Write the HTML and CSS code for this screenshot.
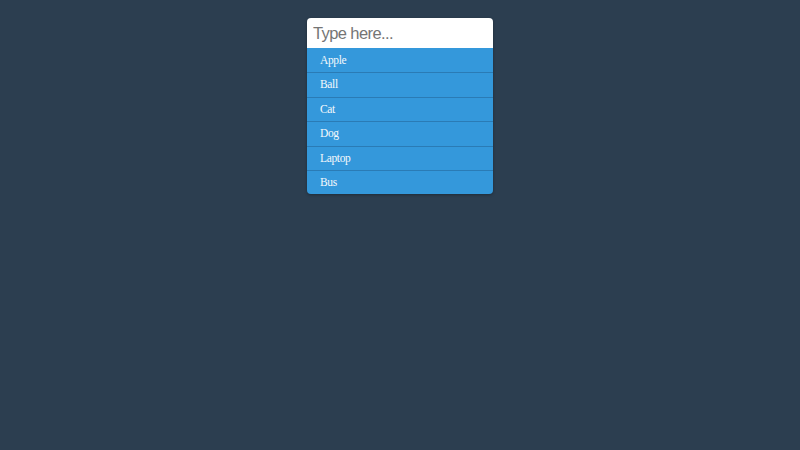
FILE: index.html
```html
<!DOCTYPE html>
<html>
<head>
<meta charset="utf-8">
<link rel="stylesheet" href="styles.css">
</head>
<body>
<div class="box">
  <input class="search" type="text" placeholder="Type here...">
  <ul class="list">
    <li class="item">Apple</li>
    <li class="item">Ball</li>
    <li class="item">Cat</li>
    <li class="item">Dog</li>
    <li class="item">Laptop</li>
    <li class="item">Bus</li>
  </ul>
</div>
</body>
</html>
```
FILE: styles.css
```css
html, body {
  margin: 0;
  padding: 0;
  background: #2c3e50;
  height: 100%;
}
body {
  padding-top: 18px;
  box-sizing: border-box;
}
.box {
  width: 186px;
  margin: 0 auto;
  border-radius: 4px;
  overflow: hidden;
  box-shadow: 0 1px 3px rgba(0,0,0,0.3);
}
.search {
  display: block;
  width: 100%;
  height: 30px;
  box-sizing: border-box;
  border: none;
  outline: none;
  margin: 0;
  padding: 0 6px;
  font-family: "Liberation Sans", Arial, sans-serif;
  font-size: 16.5px;
  letter-spacing: -0.6px;
  color: #333;
  background: #fff;
}
.search::placeholder {
  color: #757575;
}
.list {
  list-style: none;
  margin: 0;
  padding: 0;
}
.item {
  background: #3498db;
  color: #f4f8fb;
  font-family: "Liberation Serif", "Times New Roman", serif;
  font-size: 11.5px;
  letter-spacing: -0.35px;
  line-height: 13.4px;
  padding: 5px 13px;
}
.item:first-child {
  padding-top: 6px;
}
.item + .item {
  border-top: 1px solid #2a7bb5;
}
```
